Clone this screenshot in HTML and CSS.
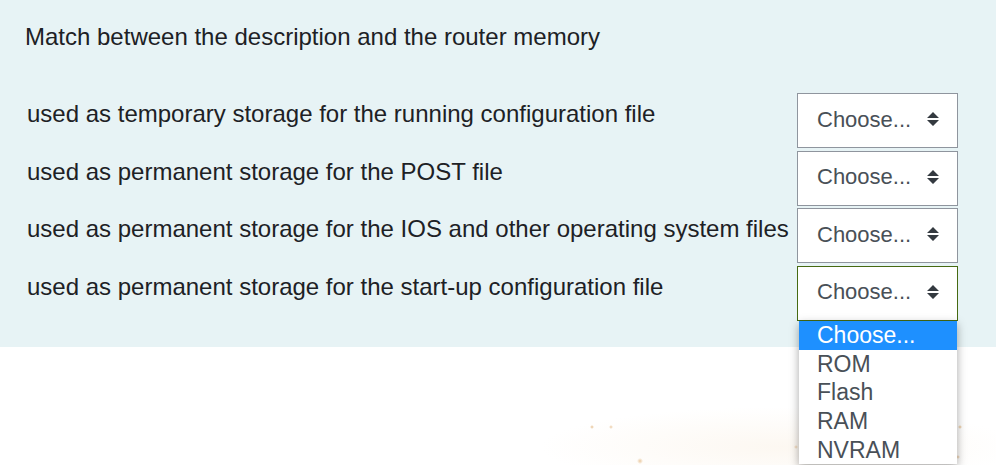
FILE: index.html
```html
<!DOCTYPE html>
<html lang="en">
<head>
  <meta charset="UTF-8">
  <meta name="viewport" content="width=device-width, initial-scale=1.0">
  <title>Quiz - Router memory</title>
  <link rel="stylesheet" href="styles.css">
</head>
<body>
  <div class="que match">
    <div class="qtext">Match between the description and the router memory</div>

    <div class="answer">
      <div class="row">
        <div class="text">used as temporary storage for the running configuration file</div>
        <div class="control">
          <select class="custom-select">
            <option>Choose...</option>
            <option>ROM</option>
            <option>Flash</option>
            <option>RAM</option>
            <option>NVRAM</option>
          </select>
          <svg class="caret" viewBox="0 0 12 14"><path d="M6 0 12 6H0Z M0 8H12L6 14Z"/></svg>
        </div>
      </div>
      <div class="row">
        <div class="text">used as permanent storage for the POST file</div>
        <div class="control">
          <select class="custom-select">
            <option>Choose...</option>
            <option>ROM</option>
            <option>Flash</option>
            <option>RAM</option>
            <option>NVRAM</option>
          </select>
          <svg class="caret" viewBox="0 0 12 14"><path d="M6 0 12 6H0Z M0 8H12L6 14Z"/></svg>
        </div>
      </div>
      <div class="row">
        <div class="text">used as permanent storage for the IOS and other operating system files</div>
        <div class="control">
          <select class="custom-select">
            <option>Choose...</option>
            <option>ROM</option>
            <option>Flash</option>
            <option>RAM</option>
            <option>NVRAM</option>
          </select>
          <svg class="caret" viewBox="0 0 12 14"><path d="M6 0 12 6H0Z M0 8H12L6 14Z"/></svg>
        </div>
      </div>
      <div class="row">
        <div class="text">used as permanent storage for the start-up configuration file</div>
        <div class="control open">
          <select class="custom-select focused">
            <option>Choose...</option>
            <option>ROM</option>
            <option>Flash</option>
            <option>RAM</option>
            <option>NVRAM</option>
          </select>
          <svg class="caret" viewBox="0 0 12 14"><path d="M6 0 12 6H0Z M0 8H12L6 14Z"/></svg>
          <!-- open option list of the focused select -->
          <ul class="listbox">
            <li class="active">Choose...</li>
            <li>ROM</li>
            <li>Flash</li>
            <li>RAM</li>
            <li>NVRAM</li>
          </ul>
        </div>
      </div>
    </div>
  </div>

  <div class="page-bg"></div>
</body>
</html>
```

FILE: styles.css
```css
body {
  margin: 0;
  font-family: "Liberation Sans", Arial, sans-serif;
  color: #1d2125;
  background: #fff;
  overflow: hidden;
}

.que {
  background: #e7f3f5;
  padding: 19px 38px 26px 25px;
}

.qtext {
  font-size: 24px;
  line-height: 36px;
}

.answer {
  margin-top: 38px;
  display: flex;
  flex-direction: column;
  gap: 2.67px;
}

.row {
  display: flex;
  align-items: flex-start;
  gap: 7px;
}

.text {
  flex: 1;
  font-size: 24px;
  line-height: 36px;
  padding: 3px 0 0 2px;
  white-space: nowrap;
}

.control {
  position: relative;
  width: 161px;
}

.custom-select {
  appearance: none;
  -webkit-appearance: none;
  box-sizing: border-box;
  display: block;
  width: 161px;
  height: 55px;
  margin: 0;
  padding: 0 36px 3px 19px;
  border: 1px solid #8f959e;
  border-radius: 0;
  background: #fff;
  font-family: inherit;
  font-size: 22px;
  color: #495057;
  outline: none;
}

.custom-select.focused {
  border-color: #466a12;
}

.caret {
  position: absolute;
  right: 19px;
  top: 19px;
  width: 12px;
  height: 14px;
  fill: #343a40;
  pointer-events: none;
}

.listbox {
  position: absolute;
  top: 100%;
  left: 2px;
  width: 158px;
  margin: 0;
  padding: 0;
  list-style: none;
  background: #fff;
  box-shadow: 0 3px 9px rgba(0, 0, 0, 0.35);
  z-index: 2;
}

.listbox li {
  font-size: 23px;
  line-height: 28.67px;
  padding-left: 18px;
  color: #495057;
}

.listbox li.active {
  background: #1e90ff;
  color: #fff;
}

/* faint paper stain peeking out under the question */
.page-bg {
  height: 119px;
  background:
    radial-gradient(circle 2px at 592px 80px, rgba(214, 150, 70, 0.6), transparent),
    radial-gradient(circle 2px at 611px 80px, rgba(214, 150, 70, 0.5), transparent),
    radial-gradient(circle 3px at 640px 114px, rgba(214, 150, 70, 0.5), transparent),
    radial-gradient(circle 2px at 960px 80px, rgba(214, 150, 70, 0.6), transparent),
    radial-gradient(circle 2px at 958px 110px, rgba(214, 150, 70, 0.5), transparent),
    radial-gradient(circle 2px at 796px 100px, rgba(214, 150, 70, 0.4), transparent),
    radial-gradient(ellipse 240px 40px at 780px 100px, rgba(252, 246, 238, 0.8), transparent);
}
```
